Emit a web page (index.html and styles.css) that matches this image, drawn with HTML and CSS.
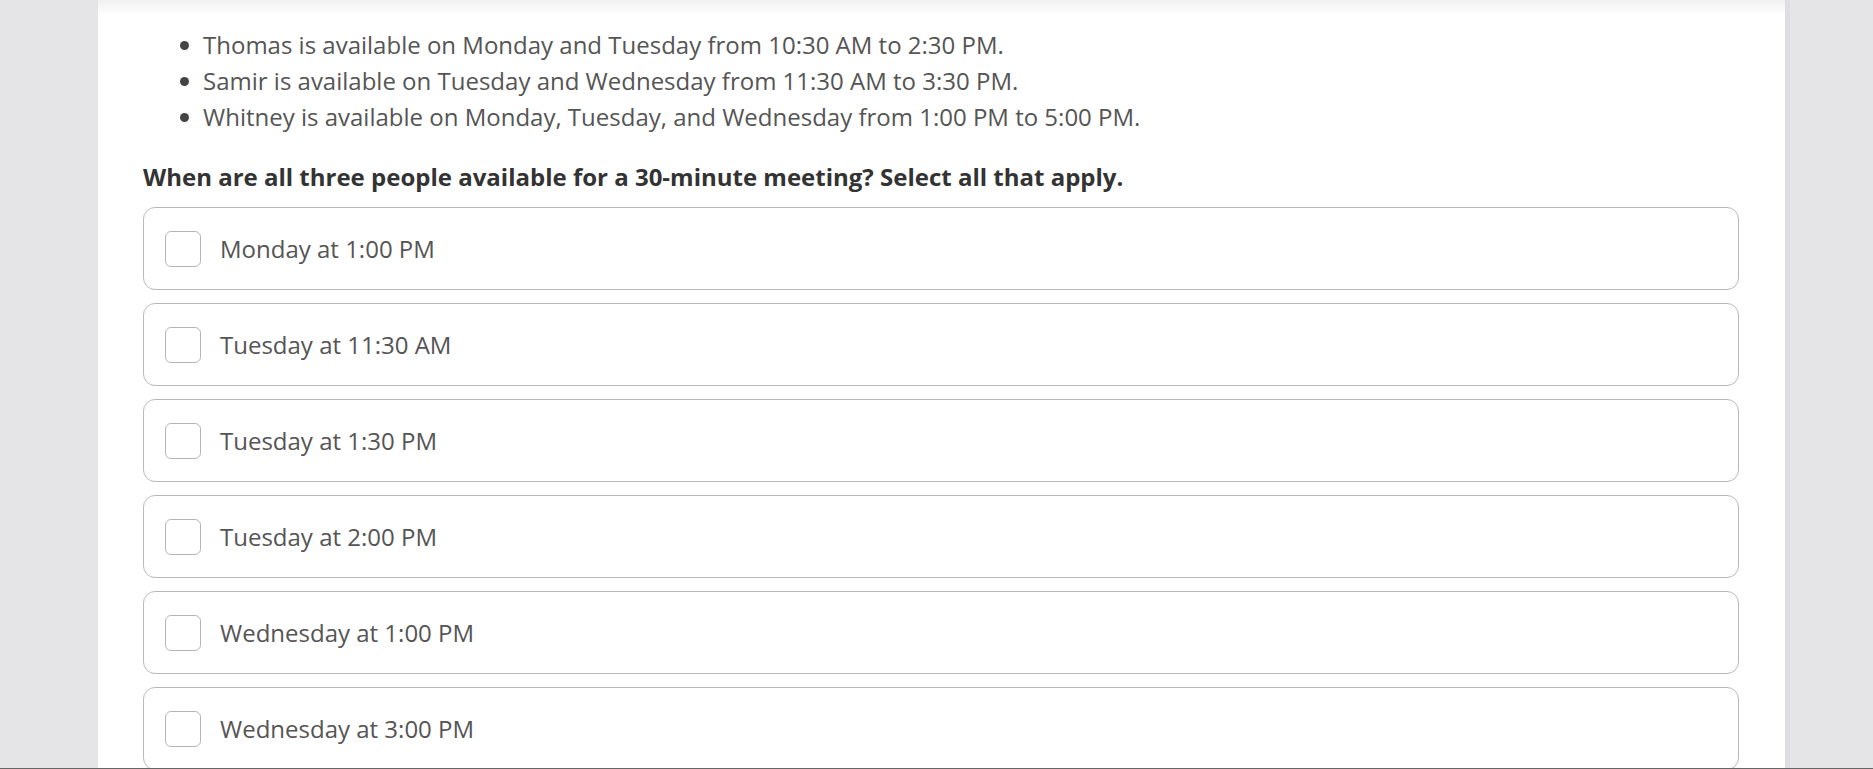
FILE: index.html
```html
<!DOCTYPE html>
<html lang="en">
<head>
<meta charset="utf-8">
<title>Meeting availability</title>
<link rel="stylesheet" href="styles.css">
</head>
<body>
<main class="panel">
  <ul class="people">
    <li>Thomas is available on Monday and Tuesday from 10:30 AM to 2:30 PM.</li>
    <li>Samir is available on Tuesday and Wednesday from 11:30 AM to 3:30 PM.</li>
    <li>Whitney is available on Monday, Tuesday, and Wednesday from 1:00 PM to 5:00 PM.</li>
  </ul>
  <p class="question">When are all three people available for a 30-minute meeting? Select all that apply.</p>
  <div class="options">
    <label class="option"><span class="box"></span><span class="label">Monday at 1:00 PM</span></label>
    <label class="option"><span class="box"></span><span class="label">Tuesday at 11:30 AM</span></label>
    <label class="option"><span class="box"></span><span class="label">Tuesday at 1:30 PM</span></label>
    <label class="option"><span class="box"></span><span class="label">Tuesday at 2:00 PM</span></label>
    <label class="option"><span class="box"></span><span class="label">Wednesday at 1:00 PM</span></label>
    <label class="option"><span class="box"></span><span class="label">Wednesday at 3:00 PM</span></label>
  </div>
</main>
<div class="bottom-edge"></div>
</body>
</html>
```
FILE: styles.css
```css
html, body {
  margin: 0;
  padding: 0;
}
body {
  background: #e5e4e7;
  font-family: "Open Sans", "Liberation Sans", sans-serif;
  overflow: hidden;
  height: 769px;
}
.panel {
  margin-left: 98px;
  width: 1692px;
  min-height: 769px;
  box-sizing: border-box;
  padding: 27px 46px 0 45px;
  background: linear-gradient(#f1f1f2 0px, #ffffff 16px);
  border-right: 5px solid #dedde0;
}
.people {
  margin: 0;
  padding: 0 0 0 37px;
  list-style: none;
  color: #555555;
  font-size: 24px;
  line-height: 36px;
}
.people li {
  display: flex;
  align-items: center;
  gap: 14px;
}
.people li::before {
  content: "";
  width: 9px;
  height: 9px;
  border-radius: 50%;
  background: #444444;
  flex: none;
}
.question {
  margin: 28px 0 16px 0;
  font-size: 24px;
  line-height: 28px;
  font-weight: 700;
  color: #333333;
}
.options {
  display: flex;
  flex-direction: column;
  gap: 13px;
}
.option {
  display: flex;
  align-items: center;
  height: 83px;
  box-sizing: border-box;
  border: 1.5px solid #b9b9b9;
  border-radius: 12px;
  padding-left: 21px;
  gap: 19px;
  background: #fff;
}
.box {
  width: 36px;
  height: 36px;
  box-sizing: border-box;
  border: 1.5px solid #b5b5b5;
  border-radius: 6px;
  flex: none;
}
.label {
  font-size: 24px;
  color: #555555;
}
.bottom-edge {
  position: fixed;
  left: 0;
  right: 0;
  bottom: 0;
  height: 1px;
  background: #666;
}
```
